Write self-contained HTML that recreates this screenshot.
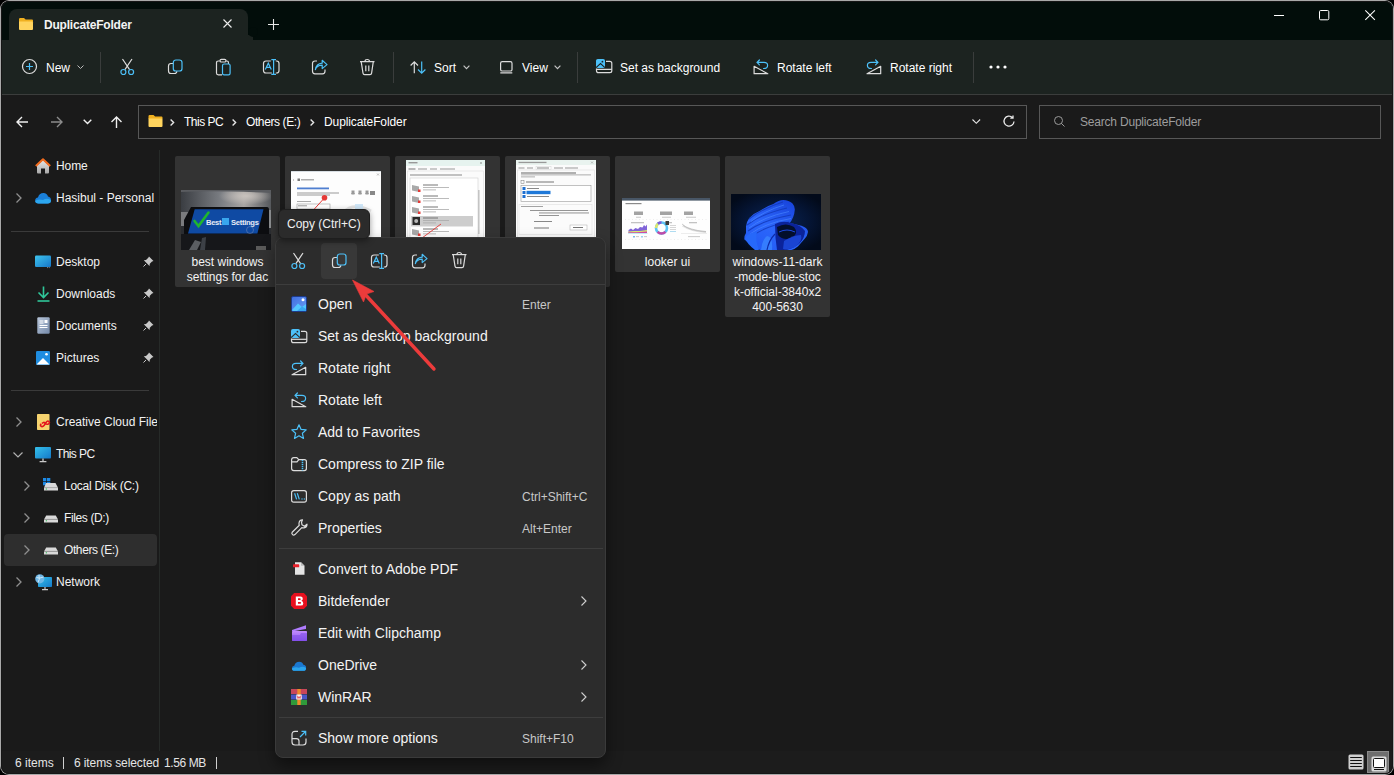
<!DOCTYPE html>
<html><head><meta charset="utf-8">
<style>
*{margin:0;padding:0;box-sizing:border-box}
html,body{width:1394px;height:775px;overflow:hidden;background:#000;font-family:"Liberation Sans",sans-serif;color:#fff}
.a{position:absolute}
#outer{position:absolute;left:0;top:0;width:1394px;height:775px;border-radius:9px;background:#a9a9a9}
#win{position:absolute;left:0;top:0;width:1394px;height:775px;clip-path:inset(1px round 8px);background:#1a1a1a}
#frame{position:absolute;left:1px;top:1px;width:1392px;height:773px;border:1px solid #161616;border-radius:8px}
#title{position:absolute;left:0;top:0;width:1394px;height:40px;background:#020d0a}
#tab{position:absolute;left:9px;top:9px;width:239px;height:31px;background:#1c2320;border-radius:8px 8px 0 0}
#toolbar{position:absolute;left:0;top:40px;width:1394px;height:55px;background:#1c2320;border-bottom:1px solid #3b3d3c}
.t12{position:absolute;font-size:12px;white-space:nowrap;line-height:14px}
.t14{position:absolute;font-size:14px;white-space:nowrap;line-height:16px}
svg{position:absolute;overflow:visible}
.sep{position:absolute;width:1px;background:#3a3d3c}
.g{stroke:#dcdcdc;fill:none;stroke-width:1.2}
.b{stroke:#4cc0f8;fill:none;stroke-width:1.2}
</style></head><body>
<div id="outer"></div>
<div id="win">
  <div id="title"></div>
  <div id="tab"></div>
  <!-- tab folder icon -->
  <svg style="left:18px;top:17px" width="16" height="14" viewBox="0 0 16 14">
    <path d="M1 2.2 Q1 1 2.2 1 H6 L7.6 2.6 H14 Q15 2.6 15 3.6 V5 H1Z" fill="#f0b020"/>
    <path d="M1 4.6 H14 Q15 4.6 15 5.6 V12 Q15 13 14 13 H2 Q1 13 1 12Z" fill="#ffd45e"/>
  </svg>
  <div class="t12" style="left:44px;top:18px;font-weight:bold;letter-spacing:-0.2px;color:#f4f4f4">DuplicateFolder</div>
  <svg style="left:223px;top:19px" width="9" height="9"><path d="M0.5 0.5 L8.5 8.5 M8.5 0.5 L0.5 8.5" stroke="#ececec" stroke-width="1.1"/></svg>
  <div class="a" style="left:248px;top:35px;width:5px;height:5px;background:#1c2320"></div><div class="a" style="left:248px;top:27px;width:10px;height:10px;border-radius:50%;background:#020d0a"></div>
  <svg style="left:268px;top:19px" width="11" height="11"><path d="M5.5 0 V11 M0 5.5 H11" stroke="#e8e8e8" stroke-width="1.1"/></svg>
  <!-- window controls -->
  <svg style="left:1274px;top:10px" width="10" height="10"><path d="M0 5.5 H10" stroke="#fff" stroke-width="1"/></svg>
  <svg style="left:1319px;top:10px" width="10" height="10"><rect x="0.5" y="0.5" width="9.3" height="9.3" rx="1.2" stroke="#fff" fill="none" stroke-width="1"/></svg>
  <svg style="left:1365px;top:10px" width="10" height="10"><path d="M0.3 0.3 L9.9 9.9 M9.9 0.3 L0.3 9.9" stroke="#fff" stroke-width="1.05"/></svg>

  <div id="toolbar"></div>
  <!-- New -->
  <svg style="left:22px;top:59px" width="16" height="16"><circle cx="7.5" cy="7.5" r="7" class="g"/><path d="M7.5 4 V11 M4 7.5 H11" class="b"/></svg>
  <div class="t12" style="left:46px;top:61px">New</div>
  <svg style="left:77px;top:65px" width="7" height="4"><path d="M0.5 0.5 L3.5 3.5 L6.5 0.5" stroke="#bbb" fill="none"/></svg>
  <div class="sep" style="left:100px;top:52px;height:31px"></div>
  <svg style="left:120px;top:59px" width="16" height="16"><path d="M2.5 0 L9.6 10.6 M12 0 L4.9 10.6" class="g"/><circle cx="3.4" cy="13" r="2.5" class="b"/><circle cx="11.1" cy="13" r="2.5" class="b"/></svg>
<svg style="left:168px;top:59px" width="16" height="16"><path d="M5 4.5 H3 Q0.5 4.5 0.5 7 V12 Q0.5 14.5 3 14.5 H6.5 Q8.8 14.5 8.8 12.3" class="g"/><rect x="5.3" y="1" width="8.7" height="11" rx="2.6" class="b"/></svg>
<svg style="left:216px;top:59px" width="16" height="17"><path d="M3.8 2 H2.3 Q0.5 2 0.5 3.8 V14 Q0.5 15.8 2.3 15.8 H6" class="g"/><path d="M10.2 2 H10.8 Q12.5 2 12.5 3.8 V5" class="g"/><rect x="4" y="0.4" width="6" height="2.6" rx="1.3" class="g"/><rect x="6.5" y="5" width="7.6" height="10.8" rx="1.6" class="b"/></svg>
<svg style="left:263px;top:59px" width="17" height="16"><path d="M7.8 2 H3 Q0.5 2 0.5 4.5 V11.5 Q0.5 14 3 14 H8.8" class="g"/><path d="M12.8 2 H13.6 Q16 2 16 4.5 V11.5 Q16 14 13.6 14 H12.8" class="g"/><path d="M10.6 0.6 V15.4 M8.3 0.6 H13 M8.3 15.4 H13" class="b"/><path d="M2.3 10.6 L5.3 4.2 L8.3 10.6 M3.4 8.4 H7.2" class="b"/></svg>
<svg style="left:312px;top:59px" width="16" height="16"><path d="M5 2 H3 Q0.5 2 0.5 4.5 V12.3 Q0.5 14.8 3 14.8 H10.5 Q13 14.8 13 12.3 V10.5" class="g"/><path d="M3.4 10.7 Q4.2 6.4 10.2 6.1 V9.6 L15 5.6 L10.2 1.3 V4.2 Q4.2 4.8 3.4 10.7Z" class="b" stroke-linejoin="round"/></svg>
<svg style="left:359px;top:59px" width="16" height="17"><path d="M1 2.6 H15.5" class="g"/><path d="M6 2.5 Q6 0.5 8.2 0.5 Q10.5 0.5 10.5 2.5" class="g"/><path d="M2.2 2.6 L4 14.2 Q4.2 15.6 5.6 15.6 H11 Q12.4 15.6 12.6 14.2 L14.3 2.6" class="g"/><path d="M6.8 6.4 V12.3 M9.8 6.4 V12.3" class="g"/></svg>
  <div class="sep" style="left:393px;top:52px;height:31px"></div>
  <!-- sort -->
  <svg style="left:410px;top:61px" width="17" height="13"><path d="M4.3 12.3 V0.8 M0.6 4.5 L4.3 0.8 L8 4.5" class="g"/><path d="M11.7 0.6 V12.2 M8 8.5 L11.7 12.2 L15.4 8.5" class="b"/></svg>
<svg style="left:463px;top:65px" width="7" height="5"><path d="M0.6 0.6 L3.5 3.6 L6.4 0.6" stroke="#c4c4c4" fill="none" stroke-width="1.2"/></svg>
<svg style="left:500px;top:61px" width="13" height="13"><rect x="0.6" y="0.6" width="11.4" height="9.4" rx="1.6" class="g"/><path d="M0.3 11.9 H12.3" class="g"/></svg>
<svg style="left:554px;top:65px" width="7" height="5"><path d="M0.6 0.6 L3.5 3.6 L6.4 0.6" stroke="#c4c4c4" fill="none" stroke-width="1.2"/></svg>
<svg style="left:596px;top:59px" width="17" height="15"><rect x="0" y="0" width="9" height="9" rx="1.8" fill="#4cc0f8"/><path d="M0.3 8.3 L4.5 4.6 L8.7 8.3" stroke="#1c2320" fill="none" stroke-width="1.1"/><circle cx="6.4" cy="2.7" r="0.9" fill="#1c2320"/><path d="M10 2.3 H13.8 Q15.8 2.3 15.8 4.3 V11.8 Q15.8 13.7 13.8 13.7 H2.5 Q0.5 13.7 0.5 11.8 V9.6" class="g"/><path d="M0.5 10.3 H15.8" class="g"/></svg>
<svg style="left:753px;top:59px" width="16" height="16"><path d="M6.4 1 L4 3.4 L6.4 5.8 M4 3.4 H11 Q14.6 3.4 14.6 6.4 Q14.6 9.5 10.5 9.5" class="b" stroke-linecap="round" stroke-linejoin="round"/><path d="M1.1 7.3 V14.7 H14.8Z" class="g" stroke-linejoin="round"/></svg>
<svg style="left:866px;top:59px" width="16" height="16"><path d="M9.6 1 L12 3.4 L9.6 5.8 M12 3.4 H5 Q1.4 3.4 1.4 6.4 Q1.4 9.5 5.5 9.5" class="b" stroke-linecap="round" stroke-linejoin="round"/><path d="M1 14.7 H14.7 V7.3Z" class="g" stroke-linejoin="round"/></svg>
  <div class="t12" style="left:434px;top:61px">Sort</div>
  <div class="t12" style="left:522px;top:61px">View</div>
  <div class="sep" style="left:577px;top:52px;height:31px"></div>
  <div class="t12" style="left:620px;top:61px">Set as background</div>
  <div class="t12" style="left:777px;top:61px">Rotate left</div>
  <div class="t12" style="left:890px;top:61px">Rotate right</div>
  <div class="sep" style="left:973px;top:52px;height:31px"></div>
  <svg style="left:989px;top:65px" width="18" height="4"><circle cx="2" cy="2" r="1.6" fill="#fff"/><circle cx="9" cy="2" r="1.6" fill="#fff"/><circle cx="16" cy="2" r="1.6" fill="#fff"/></svg>


  <!-- nav row -->
  <svg style="left:16px;top:116px" width="12" height="12"><path d="M12 6 H1 M6 1 L1 6 L6 11" stroke="#f0f0f0" fill="none" stroke-width="1.4"/></svg>
  <svg style="left:51px;top:116px" width="12" height="12"><path d="M0 6 H11 M6 1 L11 6 L6 11" stroke="#8c8c8c" fill="none" stroke-width="1.4"/></svg>
  <svg style="left:83px;top:119px" width="9" height="6"><path d="M0.7 0.7 L4.5 4.5 L8.3 0.7" stroke="#f0f0f0" fill="none" stroke-width="1.4"/></svg>
  <svg style="left:111px;top:116px" width="12" height="12"><path d="M5.5 12 V1 M0.5 6 L5.5 1 L10.5 6" stroke="#f0f0f0" fill="none" stroke-width="1.4"/></svg>
  <div class="a" style="left:138px;top:105px;width:889px;height:34px;border:1px solid #575757;background:#1a1a1a"></div>
  <svg style="left:147px;top:114px" width="17" height="14" viewBox="0 0 16 14">
    <path d="M1 2.2 Q1 1 2.2 1 H6 L7.6 2.6 H14 Q15 2.6 15 3.6 V5 H1Z" fill="#f0b020"/>
    <path d="M1 4.6 H14 Q15 4.6 15 5.6 V12 Q15 13 14 13 H2 Q1 13 1 12Z" fill="#ffd45e"/>
  </svg>
  <svg style="left:170px;top:119px" width="5" height="7"><path d="M0.6 0.6 L3.6 3.5 L0.6 6.4" stroke="#e6e6e6" fill="none" stroke-width="1.4"/></svg>
  <div class="t12" style="left:184px;top:115px;letter-spacing:-0.5px">This PC</div>
  <svg style="left:232px;top:119px" width="5" height="7"><path d="M0.6 0.6 L3.6 3.5 L0.6 6.4" stroke="#e6e6e6" fill="none" stroke-width="1.4"/></svg>
  <div class="t12" style="left:246px;top:115px;letter-spacing:-0.4px">Others (E:)</div>
  <svg style="left:310px;top:119px" width="5" height="7"><path d="M0.6 0.6 L3.6 3.5 L0.6 6.4" stroke="#e6e6e6" fill="none" stroke-width="1.4"/></svg>
  <div class="t12" style="left:324px;top:115px;letter-spacing:-0.1px">DuplicateFolder</div>
  <svg style="left:972px;top:119px" width="9" height="5"><path d="M0.5 0.5 L4.3 4.3 L8.1 0.5" stroke="#e6e6e6" fill="none" stroke-width="1.1"/></svg>
  <svg style="left:1003px;top:115px" width="13" height="13"><path d="M11 6.5 A5 5 0 1 1 9.5 2.6 M10 0.5 V3.2 H7.3" stroke="#e8e8e8" fill="none" stroke-width="1.3"/></svg>
  <div class="a" style="left:1039px;top:105px;width:342px;height:34px;border:1px solid #575757;background:#1a1a1a"></div>
  <svg style="left:1054px;top:116px" width="11" height="11"><circle cx="4.5" cy="4.5" r="4" stroke="#9a9a9a" fill="none"/><path d="M7.3 7.3 L10.5 10.5" stroke="#9a9a9a"/></svg>
  <div class="t12" style="left:1080px;top:115px;color:#9d9d9d;letter-spacing:-0.2px">Search DuplicateFolder</div>


  <!-- sidebar -->
<div class="sep" style="left:159px;top:150px;height:601px;background:#262a28"></div>
<div class="a" style="left:4px;top:534px;width:153px;height:32px;border-radius:4px;background:#2e2e2e"></div>
<div class="a" style="left:11px;top:231px;width:138px;height:1px;background:#3a3a3a"></div>
<div class="a" style="left:11px;top:390px;width:138px;height:1px;background:#3a3a3a"></div>
<div class="a" style="left:0;top:150px;width:157px;height:450px;overflow:hidden">
<div class="t12" style="left:56px;top:9px;color:#f2f2f2;letter-spacing:-0.1px">Home</div>
<div class="t12" style="left:56px;top:41px;color:#f2f2f2;letter-spacing:0px">Hasibul - Personal</div>
<div class="t12" style="left:56px;top:105px;color:#f2f2f2;letter-spacing:0px">Desktop</div>
<div class="t12" style="left:56px;top:137px;color:#f2f2f2;letter-spacing:0px">Downloads</div>
<div class="t12" style="left:56px;top:169px;color:#f2f2f2;letter-spacing:0px">Documents</div>
<div class="t12" style="left:56px;top:201px;color:#f2f2f2;letter-spacing:0px">Pictures</div>
<div class="t12" style="left:56px;top:265px;color:#f2f2f2;letter-spacing:0px">Creative Cloud Files</div>
<div class="t12" style="left:56px;top:297px;color:#f2f2f2;letter-spacing:-0.6px">This PC</div>
<div class="t12" style="left:64px;top:329px;color:#f2f2f2;letter-spacing:-0.27px">Local Disk (C:)</div>
<div class="t12" style="left:64px;top:361px;color:#f2f2f2;letter-spacing:-0.37px">Files (D:)</div>
<div class="t12" style="left:64px;top:393px;color:#f2f2f2;letter-spacing:-0.4px">Others (E:)</div>
<div class="t12" style="left:56px;top:425px;color:#f2f2f2;letter-spacing:0px">Network</div>
</div>
<svg style="left:35px;top:158px" width="16" height="16" viewBox="0 0 16 16">
   <defs><linearGradient id="hg" x1="0" y1="0" x2="0" y2="1"><stop offset="0" stop-color="#e6e6e6"/><stop offset="1" stop-color="#a8a8a8"/></linearGradient></defs>
   <path d="M2 7.5 L8 2 L14 7.5 V14.5 Q14 15.5 13 15.5 H10 V10.5 H6 V15.5 H3 Q2 15.5 2 14.5Z" fill="url(#hg)"/>
   <path d="M0.8 8 L8 1.2 L15.2 8" stroke="#f26b1d" stroke-width="2" fill="none" stroke-linejoin="round"/></svg>
<svg style="left:35px;top:192px" width="16" height="12" viewBox="0 0 16 12">
   <path d="M3.5 11.5 Q0.2 11.5 0.2 8.6 Q0.2 6 3 5.6 Q4 1 8.5 1 Q12 1 13 4.5 Q16 5 16 8.2 Q16 11.5 12.5 11.5Z" fill="#1a7fd8"/>
   <path d="M3.5 11.5 Q0.2 11.5 0.2 8.8 Q4 6.5 8 8 Q12 5.5 16 8.2 Q16 11.5 12.5 11.5Z" fill="#2ca6ee"/></svg>
<svg style="left:16px;top:193px" width="6" height="10"><path d="M0.5 0.5 L5 5 L0.5 9.5" stroke="#8f8f8f" fill="none" stroke-width="1.3"/></svg>
<svg style="left:35px;top:255px" width="16" height="13" viewBox="0 0 16 13">
   <defs><linearGradient id="dg" x1="0" y1="0" x2="1" y2="1"><stop offset="0" stop-color="#3ec4ee"/><stop offset="1" stop-color="#1676c8"/></linearGradient></defs>
   <rect x="0" y="0.5" width="16" height="11.5" rx="1.3" fill="url(#dg)"/><path d="M12 12.6 H12.8 M13.8 12.6 H14.6" stroke="#bbb" stroke-width="0.8"/></svg>
<svg style="left:143px;top:256px" width="11" height="11"><path d="M6 0.5 L10.5 5 L9 5.5 L6.8 7.8 L6.5 10 L0.8 4.3 L3 4 L5.3 1.8 Z" fill="#c8c8c8"/><path d="M3 8 L0.5 10.5" stroke="#c8c8c8"/></svg>
<svg style="left:37px;top:286px" width="13" height="16" viewBox="0 0 13 16">
   <path d="M6.5 0.5 V11 M1.5 6.5 L6.5 11.5 L11.5 6.5" stroke="#2fc79a" stroke-width="1.6" fill="none"/><path d="M0.5 15 H12.5" stroke="#2fc79a" stroke-width="1.6"/></svg>
<svg style="left:143px;top:288px" width="11" height="11"><path d="M6 0.5 L10.5 5 L9 5.5 L6.8 7.8 L6.5 10 L0.8 4.3 L3 4 L5.3 1.8 Z" fill="#c8c8c8"/><path d="M3 8 L0.5 10.5" stroke="#c8c8c8"/></svg>
<svg style="left:37px;top:317px" width="13" height="17" viewBox="0 0 13 17">
   <defs><linearGradient id="og" x1="0" y1="0" x2="1" y2="1"><stop offset="0" stop-color="#b8c6da"/><stop offset="1" stop-color="#7489a8"/></linearGradient></defs>
   <rect x="0.3" y="0.3" width="12.4" height="16.4" rx="1.2" fill="url(#og)"/>
   <path d="M2.5 4 H6.5 M2.5 6 H6.5 M2.5 8.5 H10.5 M2.5 10.5 H10.5" stroke="#fff" stroke-width="1"/><rect x="7.5" y="3" width="3" height="3" fill="#fff"/></svg>
<svg style="left:143px;top:320px" width="11" height="11"><path d="M6 0.5 L10.5 5 L9 5.5 L6.8 7.8 L6.5 10 L0.8 4.3 L3 4 L5.3 1.8 Z" fill="#c8c8c8"/><path d="M3 8 L0.5 10.5" stroke="#c8c8c8"/></svg>
<svg style="left:36px;top:351px" width="14" height="14" viewBox="0 0 14 14">
   <rect x="0" y="0" width="14" height="14" rx="1.3" fill="#1f8de0"/><path d="M0.5 13.5 L7 7 L13.5 13.5Z" fill="#fff"/><circle cx="10.5" cy="3.3" r="1.3" fill="#fff"/></svg>
<svg style="left:143px;top:352px" width="11" height="11"><path d="M6 0.5 L10.5 5 L9 5.5 L6.8 7.8 L6.5 10 L0.8 4.3 L3 4 L5.3 1.8 Z" fill="#c8c8c8"/><path d="M3 8 L0.5 10.5" stroke="#c8c8c8"/></svg>
<svg style="left:37px;top:414px" width="14" height="16" viewBox="0 0 14 16">
   <rect x="0" y="0" width="12.5" height="16" rx="0.8" fill="#f6d36f"/>
   <path d="M5 9.5 Q6.5 7.5 8.2 9.2 Q9.8 11 11.6 9.8 Q13.2 8.4 11.8 7.3 Q10.5 6.4 9.2 8.2 L7.2 11.2 Q5.5 13.4 4 12.2 Q2.8 11 4.3 9.8" stroke="#e3141d" stroke-width="1.6" fill="none"/></svg>
<svg style="left:16px;top:417px" width="6" height="10"><path d="M0.5 0.5 L5 5 L0.5 9.5" stroke="#8f8f8f" fill="none" stroke-width="1.3"/></svg>
<svg style="left:35px;top:447px" width="16" height="16" viewBox="0 0 16 16">
   <defs><linearGradient id="pg" x1="0" y1="0" x2="1" y2="1"><stop offset="0" stop-color="#35c0ea"/><stop offset="1" stop-color="#1479c9"/></linearGradient></defs>
   <rect x="0" y="0" width="16" height="11.5" rx="1" fill="url(#pg)"/><path d="M8 11.5 V14.3 M4.6 14.6 H11.4" stroke="#c9c9c9" stroke-width="1.3"/></svg>
<svg style="left:13px;top:452px" width="10" height="6"><path d="M0.5 0.5 L5 5 L9.5 0.5" stroke="#b0b0b0" fill="none" stroke-width="1.2"/></svg>
<svg style="left:43px;top:478px" width="16" height="13" viewBox="0 0 16 13">
   <rect x="0" y="0" width="3.3" height="3.3" fill="#1c8ae6"/><rect x="4" y="0" width="3.3" height="3.3" fill="#1c8ae6"/><rect x="0" y="4" width="3.3" height="3.3" fill="#1c8ae6"/><rect x="4" y="4" width="3.3" height="3.3" fill="#1c8ae6"/>
   <path d="M1 12.5 V9.8 L3 5 H12.5 L15 9.8 V12.5Z" fill="#d9d9d9"/><path d="M1 9.6 H15" stroke="#888" stroke-width="0.6"/><rect x="2.8" y="10.5" width="1.2" height="1" fill="#2bbf55"/></svg>
<svg style="left:24px;top:481px" width="6" height="10"><path d="M0.5 0.5 L5 5 L0.5 9.5" stroke="#8f8f8f" fill="none" stroke-width="1.3"/></svg>
<svg style="left:43px;top:515px" width="16" height="8" viewBox="0 0 16 8">
   <path d="M1 7.5 V4.6 L3.2 0.5 H12.8 L15 4.6 V7.5Z" fill="#d9d9d9"/><path d="M1 4.4 H15" stroke="#777" stroke-width="0.7"/><rect x="2.8" y="5.3" width="1.2" height="1" fill="#2bbf55"/></svg>
<svg style="left:24px;top:513px" width="6" height="10"><path d="M0.5 0.5 L5 5 L0.5 9.5" stroke="#8f8f8f" fill="none" stroke-width="1.3"/></svg>
<svg style="left:43px;top:547px" width="16" height="8" viewBox="0 0 16 8">
   <path d="M1 7.5 V4.6 L3.2 0.5 H12.8 L15 4.6 V7.5Z" fill="#d9d9d9"/><path d="M1 4.4 H15" stroke="#777" stroke-width="0.7"/><rect x="2.8" y="5.3" width="1.2" height="1" fill="#2bbf55"/></svg>
<svg style="left:24px;top:545px" width="6" height="10"><path d="M0.5 0.5 L5 5 L0.5 9.5" stroke="#8f8f8f" fill="none" stroke-width="1.3"/></svg>
<svg style="left:35px;top:574px" width="17" height="17" viewBox="0 0 17 17">
   <defs><linearGradient id="ng" x1="0" y1="0" x2="1" y2="1"><stop offset="0" stop-color="#35c0ea"/><stop offset="1" stop-color="#1479c9"/></linearGradient></defs>
   <rect x="3" y="3" width="14" height="10" rx="0.8" fill="url(#ng)"/><path d="M10 13 V15.3 M7 15.6 H13" stroke="#c9c9c9" stroke-width="1.2"/>
   <circle cx="4.8" cy="4.8" r="4.6" fill="#6fb7e6"/><path d="M1.5 3.5 Q4 5 8.5 3 M3 8.5 Q5 6 4 1" stroke="#d8f0ff" stroke-width="0.9" fill="none"/></svg>
<svg style="left:16px;top:577px" width="6" height="10"><path d="M0.5 0.5 L5 5 L0.5 9.5" stroke="#8f8f8f" fill="none" stroke-width="1.3"/></svg>
<!-- content -->
<div class="a" style="left:175px;top:156px;width:105px;height:131px;background:#333333;border-radius:2px"></div>
<div class="a" style="left:285px;top:156px;width:105px;height:131px;background:#333333;border-radius:2px"></div>
<div class="a" style="left:395px;top:156px;width:105px;height:131px;background:#333333;border-radius:2px"></div>
<div class="a" style="left:505px;top:156px;width:105px;height:131px;background:#333333;border-radius:2px"></div>
<div class="a" style="left:615px;top:156px;width:105px;height:116px;background:#333333;border-radius:2px"></div>
<div class="a" style="left:725px;top:156px;width:105px;height:161px;background:#333333;border-radius:2px"></div>
<svg style="left:181px;top:190px" width="90" height="60" viewBox="0 0 90 60">
  <defs>
   <linearGradient id="t1a" x1="0" y1="0" x2="1" y2="0"><stop offset="0" stop-color="#3a3d42"/><stop offset="0.45" stop-color="#7c7f84"/><stop offset="0.7" stop-color="#a9a6a4"/><stop offset="1" stop-color="#55585c"/></linearGradient>
   <radialGradient id="t1b" cx="0.72" cy="0.2" r="0.3"><stop offset="0" stop-color="#c8c2bd"/><stop offset="1" stop-color="#c8c2bd" stop-opacity="0"/></radialGradient>
  </defs>
  <rect x="0" y="0" width="90" height="60" fill="#2b2d31"/>
  <rect x="0" y="0" width="90" height="22" fill="url(#t1a)"/>
  <rect x="0" y="0" width="90" height="30" fill="url(#t1b)"/>
  <path d="M0 2 Q30 0 90 3 V0 H0Z" fill="#5a5c60"/>
  <rect x="0" y="22" width="10" height="14" fill="#7a7b7e"/>
  <rect x="84" y="20" width="6" height="18" fill="#888a8c"/>
  <path d="M10 17 H86 Q88 17 88 20 V52 Q88 55 85 55 H6 Q3 55 3 52 V30Z" fill="#0c0d10"/>
  <path d="M13.7 19.2 H82.5 L76.4 43.4 H7Z" fill="#0f4aa3"/>
  <path d="M13.5 31 L17.5 36 L27.5 22.5" stroke="#1fb52e" stroke-width="2.6" fill="none" stroke-linecap="round"/>
  <text x="25" y="35" font-family="Liberation Sans" font-weight="bold" font-size="7.6" fill="#e6ecf6" letter-spacing="-0.3">Best</text>
  <rect x="41" y="28" width="7" height="7" fill="#39a6ee"/>
  <text x="50" y="35" font-family="Liberation Sans" font-weight="bold" font-size="7.6" fill="#e6ecf6" letter-spacing="-0.3">Settings</text>
  <circle cx="69" cy="40" r="3.5" stroke="#7a8fb8" stroke-width="0.5" fill="none"/>
  <rect x="0" y="44" width="90" height="16" fill="#16171a"/>
  <path d="M8 60 L14 50 L20 52 L16 60Z" fill="#5b5e62"/>
  <path d="M19 60 L21 48 L25 47 L24 60Z" fill="#3c4046"/>
  <rect x="75" y="56" width="10" height="4" fill="#5a5a5a"/>
</svg>
<div class="t12" style="left:175px;top:255px;width:105px;text-align:center;color:#f4f4f4;line-height:15px">best windows<br>settings for dac</div>
<svg style="left:291px;top:171px" width="90" height="67" viewBox="0 0 90 67">
  <rect width="90" height="67" fill="#fdfdfd"/>
  <rect x="0" y="0" width="90" height="0.8" fill="#cfd6dc"/>
  <path d="M86 2.5 L88 4.5 M88 2.5 L86 4.5" stroke="#888" stroke-width="0.5"/>
  <path d="M3 8 L2 9 L3 10" stroke="#999" stroke-width="0.5" fill="none"/>
  <rect x="6.5" y="7.5" width="2.5" height="2.5" fill="#777"/><rect x="10" y="8.2" width="13" height="1.2" fill="#9a9a9a"/>
  <rect x="6" y="16.5" width="32" height="1.8" fill="#4f7fd0"/>
  <rect x="6" y="21.5" width="42" height="1" fill="#9a9a9a"/><rect x="6" y="23.5" width="33" height="1" fill="#9a9a9a"/>
  <rect x="6" y="30" width="14" height="0.9" fill="#a0a0a0"/>
  <rect x="6" y="33" width="33" height="5" fill="#fff" stroke="#9a9a9a" stroke-width="0.6"/>
  <rect x="7" y="34.3" width="9" height="1" fill="#999"/>
  <rect x="6" y="38.3" width="33" height="2.5" fill="#2b6fd0"/>
  <path d="M60 23 L62 21 L64 23Z M67 23 L69 21 L71 23Z M74 23 L76 21 L78 23Z" fill="#777"/>
  <rect x="60.5" y="19.5" width="3" height="4" fill="#999"/><rect x="67.5" y="19.5" width="3" height="4" fill="#999"/><rect x="74.5" y="19.5" width="3" height="4" fill="#999"/>
  <rect x="79" y="20" width="5" height="4" fill="#888"/>
  <path d="M52 42 Q62 30 80 40" stroke="#e4e4e4" stroke-width="3" fill="none"/>
  <rect x="64" y="33" width="8" height="5" fill="#cfe6f7"/>
  <path d="M22 39.5 L32 28.5" stroke="#e53935" stroke-width="1"/><circle cx="33.5" cy="26.8" r="2.8" fill="#e53935"/>
</svg>
<svg style="left:406px;top:160px" width="79" height="78" viewBox="0 0 79 78">
  <rect width="79" height="78" fill="#fbfbfb"/>
  <rect width="79" height="6" fill="#e6f3ef"/>
  <rect x="2.5" y="2" width="9" height="1.4" fill="#999"/><path d="M74 2 L76 4 M76 2 L74 4" stroke="#888" stroke-width="0.5"/>
  <rect x="2.5" y="8.5" width="7" height="1" fill="#777"/><rect x="12" y="8.5" width="9" height="1" fill="#999"/><rect x="24" y="8.5" width="7" height="1" fill="#999"/><rect x="34" y="8.5" width="15" height="1" fill="#999"/>
  <rect x="1.5" y="11" width="76" height="67" fill="none" stroke="#dedede" stroke-width="0.6"/>
  <rect x="4" y="14.5" width="52" height="1" fill="#888"/>
  <rect x="4" y="18" width="68" height="60" fill="#fff" stroke="#cfcfcf" stroke-width="0.6"/>
  <rect x="72.5" y="30" width="0.8" height="44" fill="#999"/>
  <path d="M6 25 L13 26.5 V32 L6 30.5Z" fill="#a9a9a9"/><rect x="12" y="29.5" width="2.5" height="2.5" fill="#e53935"/><rect x="17" y="24.5" width="15" height="1" fill="#777"/><rect x="17" y="27" width="26" height="0.8" fill="#aaa"/><rect x="17" y="29.5" width="13" height="0.8" fill="#aaa"/><path d="M6 36 L13 37.5 V43 L6 41.5Z" fill="#a9a9a9"/><rect x="12" y="40.5" width="2.5" height="2.5" fill="#e53935"/><rect x="17" y="35.5" width="15" height="1" fill="#777"/><rect x="17" y="38" width="26" height="0.8" fill="#aaa"/><rect x="17" y="40.5" width="13" height="0.8" fill="#aaa"/><path d="M6 47 L13 48.5 V54 L6 52.5Z" fill="#a9a9a9"/><rect x="12" y="51.5" width="2.5" height="2.5" fill="#e53935"/><rect x="17" y="46.5" width="15" height="1" fill="#777"/><rect x="17" y="49" width="26" height="0.8" fill="#aaa"/><rect x="17" y="51.5" width="13" height="0.8" fill="#aaa"/><rect x="5" y="56" width="62" height="10.5" fill="#cdcdcd"/><rect x="6.5" y="57" width="7.5" height="8" fill="#2a2a2a"/><circle cx="10.2" cy="61" r="2" fill="#bbb"/><rect x="17" y="57.5" width="15" height="1" fill="#777"/><rect x="17" y="60" width="26" height="0.8" fill="#aaa"/><rect x="17" y="62.5" width="13" height="0.8" fill="#aaa"/><path d="M6 69 L13 70.5 V76 L6 74.5Z" fill="#a9a9a9"/><rect x="12" y="73.5" width="2.5" height="2.5" fill="#e53935"/><rect x="17" y="68.5" width="15" height="1" fill="#777"/><rect x="17" y="71" width="26" height="0.8" fill="#aaa"/><rect x="17" y="73.5" width="13" height="0.8" fill="#aaa"/>
  <path d="M16 78 L35 64" stroke="#e53935" stroke-width="0.9"/>
</svg>
<svg style="left:516px;top:160px" width="80" height="78" viewBox="0 0 80 78">
  <rect width="80" height="78" fill="#fbfbfb"/>
  <rect width="80" height="5" fill="#e9f3ef"/>
  <rect x="2.5" y="1.8" width="28" height="1.3" fill="#999"/><path d="M75 1.5 L77 3.5 M77 1.5 L75 3.5" stroke="#888" stroke-width="0.5"/>
  <rect x="2.5" y="7.5" width="6" height="1" fill="#999"/><rect x="11" y="7.5" width="6" height="1" fill="#999"/><rect x="20" y="6.5" width="15" height="3" fill="#fff" stroke="#ccc" stroke-width="0.4"/><rect x="21" y="7.5" width="12" height="1" fill="#888"/><rect x="38" y="7.5" width="9" height="1" fill="#999"/><rect x="49" y="7.5" width="13" height="1" fill="#999"/>
  <rect x="1.5" y="10" width="77" height="68" fill="none" stroke="#dedede" stroke-width="0.6"/>
  <rect x="5" y="12.5" width="55" height="1" fill="#666"/><rect x="5" y="14.5" width="70" height="0.8" fill="#999"/><rect x="5" y="16.5" width="14" height="0.8" fill="#999"/>
  <rect x="5" y="20.5" width="3" height="3" fill="none" stroke="#777" stroke-width="0.5"/><rect x="10" y="21.5" width="28" height="1" fill="#777"/>
  <rect x="5" y="25.5" width="70" height="16" fill="#fff" stroke="#999" stroke-width="0.6"/>
  <rect x="6.5" y="27" width="3" height="3" fill="#1e6fd0"/><rect x="11" y="28" width="12" height="1" fill="#888"/>
  <rect x="6.5" y="31" width="3" height="3" fill="#1e6fd0"/><rect x="10.5" y="30.8" width="24" height="3.4" fill="#1e78d8"/>
  <rect x="6.5" y="35" width="3" height="3" fill="#1e6fd0"/><rect x="11" y="36" width="22" height="1" fill="#888"/>
  <rect x="3" y="44.5" width="73" height="30" fill="none" stroke="#e0e0e0" stroke-width="0.6"/>
  <rect x="5" y="46" width="22" height="0.9" fill="#999"/>
  <rect x="14" y="50" width="58" height="0.9" fill="#888"/><rect x="23" y="52.5" width="50" height="0.9" fill="#888"/><rect x="23" y="55" width="20" height="0.9" fill="#888"/>
  <rect x="18" y="61" width="18" height="1" fill="#888"/>
  <rect x="18" y="67.5" width="15" height="1" fill="#777"/>
  <rect x="54" y="65" width="17" height="5" fill="#fff" stroke="#aaa" stroke-width="0.5"/><rect x="57" y="67" width="10" height="1" fill="#777"/>
</svg>
<svg style="left:622px;top:198px" width="88" height="51" viewBox="0 0 88 51">
  <rect width="88" height="51" fill="#fefefe"/>
  <rect width="88" height="2.6" fill="#485666"/>
  <rect x="3.5" y="5" width="16" height="1.2" fill="#8a8a8a"/>
  <rect x="12" y="13.5" width="9" height="3.5" fill="#8c8c8c" opacity=".8"/><rect x="38" y="13.5" width="12" height="3.5" fill="#8c8c8c" opacity=".8"/><rect x="62" y="13.5" width="9" height="3.5" fill="#8c8c8c" opacity=".8"/>
  <rect x="14" y="18.8" width="5" height="0.8" fill="#bbb"/><rect x="40" y="18.8" width="9" height="0.8" fill="#bbb"/><rect x="64" y="18.8" width="10" height="0.8" fill="#bbb"/>
  <path d="M3 21.5 H85" stroke="#ddd" stroke-width="0.5" stroke-dasharray="1 2.5"/>
  <rect x="9" y="24.3" width="13" height="0.9" fill="#aaa"/><rect x="35" y="24.3" width="15" height="0.9" fill="#aaa"/><rect x="67" y="24.3" width="8" height="0.9" fill="#aaa"/>
  <path d="M6.5 35 V32 L9 30.5 L11 32 L13.5 30 L16 31 L18 29 L20.5 29.5 L22 27 L23.5 28.5 L25 26.5 V35Z" fill="#8064d8"/>
  <path d="M6.5 35 V33.5 L12 33 L18 33 L25 32 V35Z" fill="#d7e86c"/>
  <path d="M6.5 35 V34.3 L15 34.2 L25 33.5 V35Z" fill="#d04aa6"/>
  <rect x="6" y="35" width="19.5" height="0.6" fill="#9adcf0"/>
  <circle cx="39.5" cy="30" r="5.5" fill="none" stroke="#5ec4f4" stroke-width="2.6"/>
  <path d="M35.6 33.9 A5.5 5.5 0 0 0 43.4 33.9" fill="none" stroke="#c04aa8" stroke-width="2.6"/>
  <path d="M34 30 A5.5 5.5 0 0 1 36 25.7" fill="none" stroke="#dbe86e" stroke-width="2.6"/>
  <path d="M36 25.7 A5.5 5.5 0 0 1 39.5 24.5" fill="none" stroke="#7a5ad8" stroke-width="2.6"/>
  <rect x="43.5" y="23" width="3.5" height="4" fill="#3a3a3a"/>
  <rect x="48" y="27" width="6" height="0.8" fill="#ccc"/><rect x="48" y="29" width="6" height="0.8" fill="#ccc"/><rect x="48" y="31" width="6" height="0.8" fill="#ccc"/><rect x="48" y="33" width="6" height="0.8" fill="#9cd4ee"/>
  <path d="M60 26 Q66 32 84 33.5 M61 27.5 Q68 33 84 34" stroke="#9a9a9a" stroke-width="0.5" fill="none"/>
  <path d="M60 28 Q70 34 84 34.5" stroke="#cfcfcf" stroke-width="0.5" fill="none"/>
  <rect x="59" y="35.5" width="26" height="0.5" fill="#ddd"/>
  <rect x="11" y="38" width="2" height="1.5" fill="#7ab8e8"/><rect x="14" y="38.3" width="3" height="0.8" fill="#bbb"/><rect x="19" y="38" width="2" height="1.5" fill="#9ad0f0"/><rect x="22" y="38.3" width="3" height="0.8" fill="#bbb"/>
  <rect x="66" y="38.3" width="12" height="0.8" fill="#bbb"/>
  <path d="M3 41.5 H85" stroke="#ddd" stroke-width="0.5" stroke-dasharray="1 2.5"/>
</svg>
<svg style="left:731px;top:194px" width="90" height="56" viewBox="0 0 90 56">
  <defs>
   <radialGradient id="wbg" cx="0.5" cy="0.5" r="0.6"><stop offset="0" stop-color="#0a2656"/><stop offset="0.6" stop-color="#051535"/><stop offset="1" stop-color="#020a1a"/></radialGradient>
   <linearGradient id="wg1" x1="0" y1="1" x2="0.7" y2="0"><stop offset="0" stop-color="#1f58f4"/><stop offset="0.5" stop-color="#2c66fa"/><stop offset="1" stop-color="#1844dc"/></linearGradient>
  </defs>
  <rect width="90" height="56" fill="url(#wbg)"/>
  <path d="M15 32.4 Q16 27 18.3 24.1 Q23 19 29 16.7 Q36 12 42.3 10 Q48 6 52.2 5.9 Q58 6 61.3 9.2 Q64 12 63.8 15.8 Q63.5 20 62.1 23.3 Q60.5 27 58.8 29 Q62 29.5 66.2 30.7 Q71 31.5 73.7 33.2 Q77 35 77 38.1 Q76.5 42 73.7 44.8 Q70 49 67.1 52.2 Q64 55 60.5 56 H29 Q20 52 13.4 45.6 Q13 42 15 39Z" fill="url(#wg1)"/>
  <path d="M18 25 Q32 14 52 8 M16 31 Q30 20 56 14 M17 37 Q32 26 60 21 M20 43 Q34 32 58 28" stroke="#1238b8" stroke-width="1.1" fill="none" opacity=".8"/>
  <path d="M20 27.5 Q33 17 53 11 M18 34 Q32 23 58 17.5 M19 40 Q34 29 60 24.5" stroke="#4a88ff" stroke-width="0.9" fill="none" opacity=".7"/>
  <path d="M44 30 Q52 26 60 29 Q70 31 74 37 Q74 44 68 50 Q60 56 52 56 H46 Q44 44 44 30Z" fill="#0b239a"/>
  <path d="M46 33 Q55 28 63 33 Q68 39 61 44 Q52 47 47 41Z" fill="#030f2c"/>
  <path d="M53 47 Q62 41 70 41 Q72 47 64 53 Q58 56 52 55Z" fill="#1a44d2"/>
  <path d="M48 38 Q56 34 64 38" stroke="#1b48e0" stroke-width="1" fill="none"/>
  <path d="M30 56 Q31 46 36 42 Q42 42 41 56Z" fill="#3a84ff" opacity=".8"/>
  <path d="M14 44 Q18 38 26 38 Q24 46 28 56 H24 Q16 50 14 44Z" fill="#2668fa"/>
  <path d="M36 56 Q38 46 44 40" stroke="#0d2aa8" stroke-width="1.2" fill="none"/>
</svg>
<div class="t12" style="left:615px;top:255px;width:105px;text-align:center;color:#f4f4f4">looker ui</div>
<div class="t12" style="left:725px;top:255px;width:105px;text-align:center;color:#f4f4f4;line-height:15px">windows-11-dark<br>-mode-blue-stoc<br>k-official-3840x2<br>400-5630</div>
  <div class="a" style="left:0;top:751px;width:1394px;height:24px;background:#1c1c1c"></div>
  <!-- status bar -->
  <div class="t12" style="left:15px;top:756px;color:#e4e4e4">6 items</div>
  <div class="a" style="left:63px;top:757px;width:1px;height:12px;background:#cfcfcf"></div>
  <div class="t12" style="left:74px;top:756px;color:#e4e4e4;letter-spacing:-0.1px">6 items selected</div><div class="t12" style="left:164px;top:756px;color:#e4e4e4;letter-spacing:-0.4px">1.56 MB</div>
  <div class="a" style="left:216px;top:757px;width:1px;height:12px;background:#cfcfcf"></div>
  <svg style="left:1348px;top:754px" width="16" height="16"><rect x="0.5" y="0.5" width="15" height="15" rx="1.5" fill="#cfcfcf"/><path d="M2.2 3.5 H13.8 M2.2 6.5 H13.8 M2.2 9.5 H13.8 M2.2 12.5 H13.8" stroke="#111" stroke-width="1"/></svg>
  <div class="a" style="left:1367px;top:751px;width:22px;height:22px;background:#6e6e6e;border:1px solid #8a8a8a"></div>
  <svg style="left:1371px;top:756px" width="16" height="16"><rect x="0.5" y="0.5" width="15" height="15" rx="1.5" fill="#dcdcdc"/><rect x="2.5" y="2.5" width="11" height="9" rx="1" fill="#fff" stroke="#111" stroke-width="1"/><path d="M3 13.5 H13" stroke="#111"/></svg>


<!-- menu -->
<div class="a" style="left:275px;top:237px;width:331px;height:521px;border-radius:8px;background:#2c2c2c;border:1px solid #3a3a3a;box-shadow:0 8px 16px rgba(0,0,0,0.45)"></div>
<div class="a" style="left:276px;top:284px;width:329px;height:1px;background:#3d3d3d"></div>
<div class="a" style="left:279px;top:548px;width:324px;height:1px;background:#3d3d3d"></div>
<div class="a" style="left:279px;top:717px;width:324px;height:1px;background:#3d3d3d"></div>
<div class="a" style="left:321px;top:243px;width:36px;height:36px;border-radius:4px;background:#383838"></div>
<svg style="left:291px;top:253px" width="16" height="16"><path d="M2.5 0 L9.6 10.6 M12 0 L4.9 10.6" class="g"/><circle cx="3.4" cy="13" r="2.5" class="b"/><circle cx="11.1" cy="13" r="2.5" class="b"/></svg>
<svg style="left:332px;top:253px" width="16" height="16"><path d="M5 4.5 H3 Q0.5 4.5 0.5 7 V12 Q0.5 14.5 3 14.5 H6.5 Q8.8 14.5 8.8 12.3" class="g"/><rect x="5.3" y="1" width="8.7" height="11" rx="2.6" class="b"/></svg>
<svg style="left:371px;top:253px" width="17" height="16"><path d="M7.8 2 H3 Q0.5 2 0.5 4.5 V11.5 Q0.5 14 3 14 H8.8" class="g"/><path d="M12.8 2 H13.6 Q16 2 16 4.5 V11.5 Q16 14 13.6 14 H12.8" class="g"/><path d="M10.6 0.6 V15.4 M8.3 0.6 H13 M8.3 15.4 H13" class="b"/><path d="M2.3 10.6 L5.3 4.2 L8.3 10.6 M3.4 8.4 H7.2" class="b"/></svg>
<svg style="left:412px;top:253px" width="16" height="16"><path d="M5 2 H3 Q0.5 2 0.5 4.5 V12.3 Q0.5 14.8 3 14.8 H10.5 Q13 14.8 13 12.3 V10.5" class="g"/><path d="M3.4 10.7 Q4.2 6.4 10.2 6.1 V9.6 L15 5.6 L10.2 1.3 V4.2 Q4.2 4.8 3.4 10.7Z" class="b" stroke-linejoin="round"/></svg>
<svg style="left:451px;top:252px" width="16" height="17"><path d="M1 2.6 H15.5" class="g"/><path d="M6 2.5 Q6 0.5 8.2 0.5 Q10.5 0.5 10.5 2.5" class="g"/><path d="M2.2 2.6 L4 14.2 Q4.2 15.6 5.6 15.6 H11 Q12.4 15.6 12.6 14.2 L14.3 2.6" class="g"/><path d="M6.8 6.4 V12.3 M9.8 6.4 V12.3" class="g"/></svg>
<div class="t14" style="left:318px;top:296px;color:#f4f4f4">Open</div>
<div class="t12" style="left:522px;top:298px;color:#c8c8c8">Enter</div>
<svg style="left:291px;top:296px" width="16" height="16"><defs><linearGradient id="mo" x1="0" y1="0" x2="1" y2="1"><stop offset="0" stop-color="#3f6fe0"/><stop offset="1" stop-color="#6a9cf5"/></linearGradient></defs><rect x="0.5" y="0.5" width="15" height="15" rx="1.5" fill="url(#mo)" stroke="#1d3b8c" stroke-width="1"/><path d="M1 14 L7 7.5 L11 11 L15 8 V14 Q15 15 14 15 H2 Q1 15 1 14Z" fill="#52c6ff"/><path d="M6 15 L11 10.5 L15 13 V15Z" fill="#38a6f0"/><circle cx="12" cy="3.8" r="1.5" fill="#fff"/></svg>
<div class="t14" style="left:318px;top:328px;color:#f4f4f4">Set as desktop background</div>
<svg style="left:291px;top:329px" width="17" height="15"><rect x="0" y="0" width="9" height="9" rx="1.8" fill="#4cc0f8"/><path d="M0.3 8.3 L4.5 4.6 L8.7 8.3" stroke="#2c2c2c" fill="none" stroke-width="1.1"/><circle cx="6.4" cy="2.7" r="0.9" fill="#2c2c2c"/><path d="M10 2.3 H13.8 Q15.8 2.3 15.8 4.3 V11.8 Q15.8 13.7 13.8 13.7 H2.5 Q0.5 13.7 0.5 11.8 V9.6" class="g"/><path d="M0.5 10.3 H15.8" class="g"/></svg>
<div class="t14" style="left:318px;top:360px;color:#f4f4f4">Rotate right</div>
<svg style="left:291px;top:360px" width="16" height="16"><path d="M9.6 1 L12 3.4 L9.6 5.8 M12 3.4 H5 Q1.4 3.4 1.4 6.4 Q1.4 9.5 5.5 9.5" class="b" stroke-linecap="round" stroke-linejoin="round"/><path d="M1 14.7 H14.7 V7.3Z" class="g" stroke-linejoin="round"/></svg>
<div class="t14" style="left:318px;top:392px;color:#f4f4f4">Rotate left</div>
<svg style="left:291px;top:392px" width="16" height="16"><path d="M6.4 1 L4 3.4 L6.4 5.8 M4 3.4 H11 Q14.6 3.4 14.6 6.4 Q14.6 9.5 10.5 9.5" class="b" stroke-linecap="round" stroke-linejoin="round"/><path d="M1.1 7.3 V14.7 H14.8Z" class="g" stroke-linejoin="round"/></svg>
<div class="t14" style="left:318px;top:424px;color:#f4f4f4">Add to Favorites</div>
<svg style="left:291px;top:424px" width="16" height="16"><path d="M8 0.8 L10.1 5.4 L15.2 5.9 L11.4 9.3 L12.5 14.4 L8 11.8 L3.5 14.4 L4.6 9.3 L0.8 5.9 L5.9 5.4Z" stroke="#4cc0f8" fill="none" stroke-width="1.2" stroke-linejoin="round"/></svg>
<div class="t14" style="left:318px;top:456px;color:#f4f4f4">Compress to ZIP file</div>
<svg style="left:291px;top:457px" width="16" height="15"><path d="M0.6 2.8 Q0.6 0.6 2.8 0.6 H5.8 L7.8 2.6 H13.4 Q15.4 2.6 15.4 4.6 V11.6 Q15.4 13.6 13.4 13.6 H2.8 Q0.6 13.6 0.6 11.6Z" class="g"/><path d="M0.6 4.8 H6 L7.8 2.6" class="g"/><path d="M11.5 3 V13.5" stroke="#4cc0f8" stroke-width="1.6" stroke-dasharray="1.2 0.8"/></svg>
<div class="t14" style="left:318px;top:488px;color:#f4f4f4">Copy as path</div>
<div class="t12" style="left:522px;top:490px;color:#c8c8c8">Ctrl+Shift+C</div>
<svg style="left:291px;top:490px" width="16" height="13"><rect x="0.6" y="0.6" width="14.8" height="11.6" rx="2.2" class="g"/><path d="M3.6 3.2 L5.6 9.4 M6.3 3.2 L8.3 9.4" class="b" stroke-width="1.3"/><path d="M10.5 9 H11.5 M12.8 9 H13.8" stroke="#4cc0f8" stroke-width="1.3"/></svg>
<div class="t14" style="left:318px;top:520px;color:#f4f4f4">Properties</div>
<div class="t12" style="left:522px;top:522px;color:#c8c8c8">Alt+Enter</div>
<svg style="left:291px;top:519px" width="17" height="17"><path d="M11.5 0.8 Q8.3 1 8 4.2 Q7.9 5.3 8.3 6.2 L1.2 13.2 Q0.3 14.5 1.5 15.6 Q2.6 16.6 3.9 15.6 L10.8 8.6 Q11.8 9.1 13 8.9 Q16 8.4 16 5.2 L13.4 7.2 L11 5.8 L10.5 3.2 Z" class="g" stroke-linejoin="round"/></svg>
<div class="t14" style="left:318px;top:561px;color:#f4f4f4">Convert to Adobe PDF</div>
<svg style="left:293px;top:562px" width="12" height="13"><path d="M2 0.2 H8 L11.5 3.7 V12.8 H2Z" fill="#e4e4e4"/><path d="M8 0.2 V3.7 H11.5Z" fill="#b8b8b8"/><rect x="0" y="2.3" width="6.2" height="3" rx="0.6" fill="#e8202a"/></svg>
<div class="t14" style="left:318px;top:593px;color:#f4f4f4">Bitdefender</div>
<svg style="left:581px;top:596px" width="6" height="10"><path d="M0.5 0.5 L5 5 L0.5 9.5" stroke="#d0d0d0" fill="none" stroke-width="1.1"/></svg>
<svg style="left:291px;top:593px" width="16" height="16"><path d="M3.2 0 H12.8 L16 3.2 V12.8 L12.8 16 H3.2 L0 12.8 V3.2Z" fill="#e8101e"/><path d="M4.8 3.4 H9.6 Q11.8 3.4 11.8 5.7 Q11.8 7.2 10.4 7.8 Q12.3 8.3 12.3 10.4 Q12.3 12.6 9.8 12.6 H4.8Z M7 5.3 V7.1 H9 Q9.6 7.1 9.6 6.2 Q9.6 5.3 9 5.3Z M7 9 V10.7 H9.4 Q10 10.7 10 9.85 Q10 9 9.4 9Z" fill="#fff" fill-rule="evenodd"/></svg>
<div class="t14" style="left:318px;top:625px;color:#f4f4f4">Edit with Clipchamp</div>
<svg style="left:291px;top:625px" width="16" height="16"><defs><linearGradient id="cg" x1="0" y1="0" x2="0" y2="1"><stop offset="0" stop-color="#c28cff"/><stop offset="1" stop-color="#8b55f0"/></linearGradient></defs><path d="M1 5 L15 0.3 V4 L1 6.5Z" fill="#b07cff"/><rect x="1" y="6" width="15" height="10" rx="0.8" fill="url(#cg)"/><path d="M1 10 H9 L10 8 H16 V16 H1Z" fill="#7d4be6" opacity=".55"/></svg>
<div class="t14" style="left:318px;top:657px;color:#f4f4f4">OneDrive</div>
<svg style="left:581px;top:660px" width="6" height="10"><path d="M0.5 0.5 L5 5 L0.5 9.5" stroke="#d0d0d0" fill="none" stroke-width="1.1"/></svg>
<svg style="left:291px;top:661px" width="16" height="10" viewBox="0 0 16 11"><path d="M3.5 10.8 Q0.2 10.8 0.2 8 Q0.2 5.6 2.8 5.2 Q4 0.8 8.3 0.8 Q11.8 0.8 12.8 4.2 Q15.8 4.6 15.8 7.6 Q15.8 10.8 12.5 10.8Z" fill="#1b78d0"/><path d="M3.5 10.8 Q0.2 10.8 0.2 8.2 Q4 6 8 7.4 Q12 5.2 15.8 7.6 Q15.8 10.8 12.5 10.8Z" fill="#2aa4ec"/></svg>
<div class="t14" style="left:318px;top:689px;color:#f4f4f4">WinRAR</div>
<svg style="left:581px;top:692px" width="6" height="10"><path d="M0.5 0.5 L5 5 L0.5 9.5" stroke="#d0d0d0" fill="none" stroke-width="1.1"/></svg>
<svg style="left:291px;top:689px" width="16" height="16"><rect x="0" y="0" width="16" height="5" fill="#c8465a"/><rect x="0" y="5.5" width="16" height="5" fill="#4a56c8"/><rect x="0" y="11" width="16" height="5" fill="#2f9a3a"/><rect x="6.3" y="0" width="3.4" height="16" fill="#f08a2a"/><rect x="5.2" y="5.6" width="5.6" height="4.8" rx="0.5" fill="#f4f4f4"/><path d="M6 6.5 L7 9.5 L8 7.5 L9 9.5 L10 6.5" stroke="#d23" stroke-width="0.7" fill="none"/></svg>
<div class="t14" style="left:318px;top:730px;color:#f4f4f4">Show more options</div>
<div class="t12" style="left:522px;top:732px;color:#c8c8c8">Shift+F10</div>
<svg style="left:291px;top:730px" width="16" height="16"><path d="M7 1.3 H4 Q1 1.3 1 4.3 V12 Q1 15 4 15 H12 Q15 15 15 12 V8.5" class="g"/><path d="M1 8.6 H5.5 Q8 8.6 8 11 V15" class="g"/><path d="M9 7 L14.5 1.5 M10.5 1.3 H14.7 V5.5" class="b"/></svg>
<div class="a" style="left:278px;top:209px;width:92px;height:30px;border-radius:6px;background:#2b2b2b;border:1px solid #1e1e1e;box-shadow:0 2px 6px rgba(0,0,0,.4)"></div>
<div class="t12" style="left:287px;top:217px;color:#f0f0f0">Copy (Ctrl+C)</div>
<svg style="left:0;top:0" width="1394" height="775"><path d="M434 369 L362 291" stroke="#ec3b3b" stroke-width="3.4" stroke-linecap="round"/><path d="M352.5 280 L374 291.5 L366.5 294 L363.5 302Z" fill="#ec3b3b" stroke="#ec3b3b" stroke-width="0.6" stroke-linejoin="round"/></svg>
  <div id="frame"></div>
</div>
</body></html>
